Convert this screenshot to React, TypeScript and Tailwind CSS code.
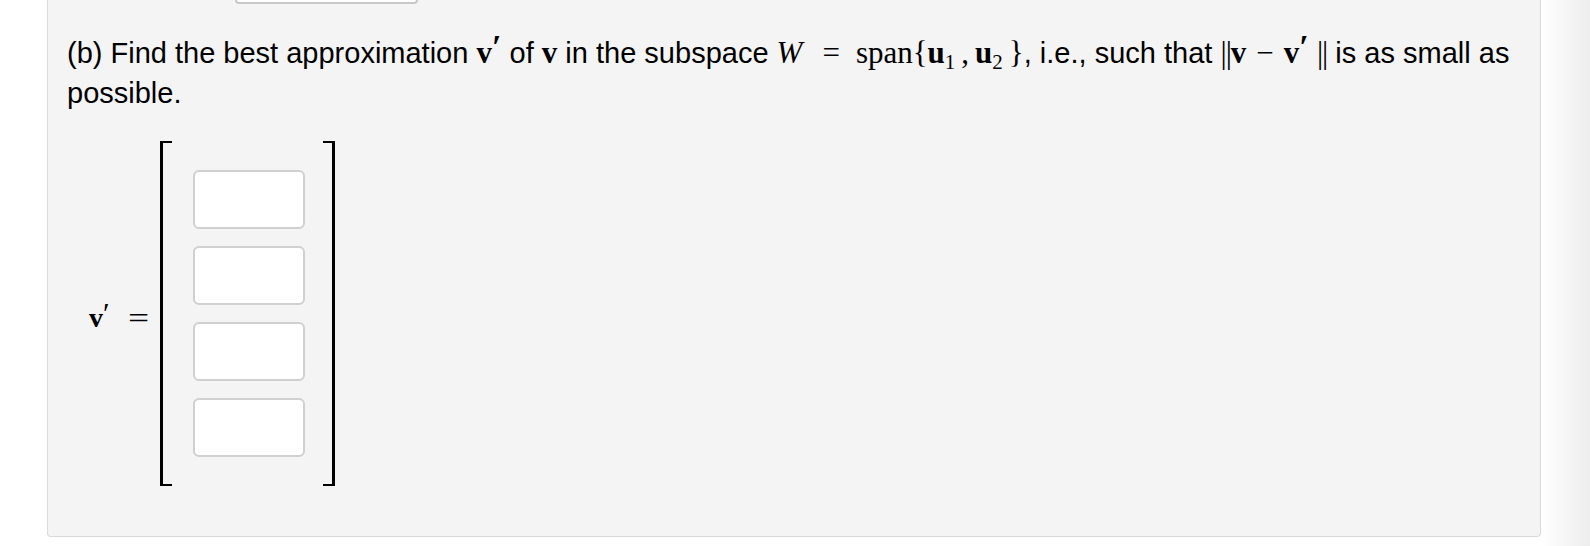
import React from 'react';

const serif = "font-['Liberation_Serif',serif] leading-none";

// bold vector letter with optional prime
const Vec = ({ ch, prime }: { ch: string; prime?: boolean }) => (
  <span className={`${serif} text-[31px] font-bold`}>
    {ch}
    {prime && <span className="text-[34px] align-[5px]">′</span>}
  </span>
);

const Sub = ({ n }: { n: string }) => (
  <span className={`${serif} text-[21px] align-[-6px]`}>{n}</span>
);

const AnswerBox = () => (
  <input
    type="text"
    className="w-[112px] h-[59px] bg-white border-2 border-[#d0d0d0] rounded-[6px] outline-none"
  />
);

export default function App() {
  return (
    <div className="flex h-[546px] bg-white">
      <div className="w-[47px] shrink-0" />

      <div className="w-[1494px] h-[537px] shrink-0 bg-[#f4f4f4] border border-t-0 border-[#dadada] rounded-b-[4px] px-[19px] font-['Liberation_Sans',Arial,sans-serif] text-black">
        {/* bottom edge of the previous answer field */}
        <div className="ml-[168px] w-[183px] h-[4px] bg-white border-2 border-t-0 border-[#c8c8c8] rounded-b-[6px]" />

        <p className="mt-[26px] text-[29px] leading-[40px]">
          (b) Find the best approximation <Vec ch="v" prime /> of <Vec ch="v" /> in the subspace{' '}
          <span className={`${serif} text-[31px] italic`}>W</span>
          <span className={`${serif} text-[31px] ml-[20px] mr-[16px]`}>=</span>
          <span className={`${serif} text-[31px]`}>span{'{'}</span>
          <Vec ch="u" />
          <Sub n="1" />
          <span className={`${serif} text-[31px] mx-[6px]`}>,</span>
          <Vec ch="u" />
          <Sub n="2" />
          <span className={`${serif} text-[31px] ml-[6px]`}>{'}'}</span>, i.e., such that{' '}
          <span className={`${serif} text-[31px] tracking-[-1px]`}>||</span>
          <Vec ch="v" />
          <span className={`${serif} text-[31px] mx-[10px]`}>−</span>
          <Vec ch="v" prime />
          <span className={`${serif} text-[31px] tracking-[-1px] ml-[8px]`}>||</span> is as small as possible.
        </p>

        <div className="mt-[28px] ml-[22px] flex items-center">
          <div className="font-['Liberation_Serif',serif] text-[28px] flex items-center pt-[8px]">
            <span className="font-bold">v</span>
            <span className="text-[30px] -mt-[10px]">′</span>
            <span className="ml-[20px] text-[30px] scale-x-125">=</span>
          </div>

          <div className="ml-[14px] w-[12px] h-[345px] border-l-[3px] border-y-2 border-black" />

          <div className="ml-[21px] py-[29px] flex flex-col gap-[17px]">
            <AnswerBox />
            <AnswerBox />
            <AnswerBox />
            <AnswerBox />
          </div>

          <div className="ml-[18px] w-[12px] h-[345px] border-r-[3px] border-y-2 border-black" />
        </div>
      </div>

      <div className="flex-1 bg-gradient-to-r from-white to-[#ededed]" />
    </div>
  );
}
